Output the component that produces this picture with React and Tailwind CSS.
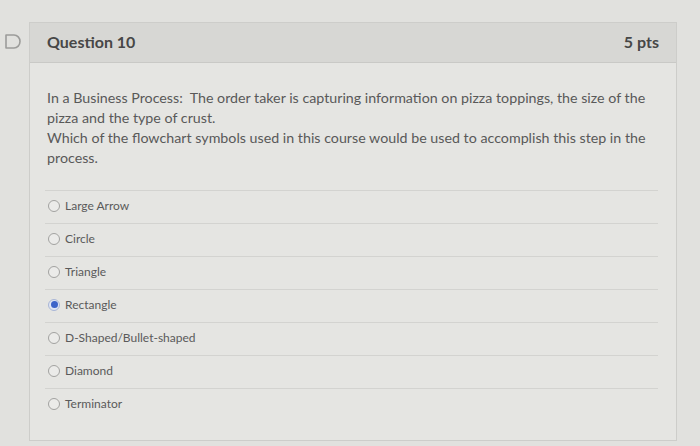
import React from "react";

const options = [
  { label: "Large Arrow" },
  { label: "Circle" },
  { label: "Triangle" },
  { label: "Rectangle", selected: true },
  { label: "D-Shaped/Bullet-shaped" },
  { label: "Diamond" },
  { label: "Terminator" },
];

function Radio({ selected }) {
  if (selected) {
    return (
      <span className="flex h-[12px] w-[12px] items-center justify-center rounded-full border border-[#a9b6d6] bg-[#dfe5f3]">
        <span className="h-[7px] w-[7px] rounded-full bg-[#3c63c9]" />
      </span>
    );
  }
  return <span className="h-[12px] w-[12px] rounded-full border-[1.5px] border-[#a2a2a0] bg-[#ebebe9]" />;
}

export default function App() {
  return (
    <div
      className="flex h-[446px] w-[700px] overflow-hidden bg-[#e1e1de] pt-[22px]"
      style={{ fontFamily: "Lato, 'Open Sans', sans-serif" }}
    >
      <div className="w-[29px] shrink-0">
        <svg className="ml-[5px] mt-[12px]" width="16" height="15" viewBox="0 0 16 15">
          <path
            d="M1 1 H9 A6 6.5 0 0 1 9 14 H1 Z"
            fill="none"
            stroke="#9c9c9a"
            strokeWidth="1.6"
            strokeLinejoin="round"
          />
        </svg>
      </div>
      <div className="flex h-[419px] w-[648px] flex-col border border-[#cdcdca] bg-[#e5e5e2]">
        <div className="flex h-[40px] shrink-0 items-center justify-between border-b border-[#c9c9c6] bg-[#d7d7d4] px-[17px]">
          <span className="pb-[1px] text-[16px] font-bold text-[#474747]">Question 10</span>
          <span className="pb-[1px] text-[16px] font-bold text-[#474747]">5 pts</span>
        </div>
        <div className="px-[17px] pt-[25px]">
          <div className="text-[14.25px] leading-[20px] text-[#595959] whitespace-nowrap">
            <span className="block">
              In a Business Process:&nbsp; The order taker is capturing information on pizza toppings, the size of the
            </span>
            <span className="block">pizza and the type of crust.</span>
            <span className="block">
              Which of the flowchart symbols used in this course would be used to accomplish this step in the
            </span>
            <span className="block">process.</span>
          </div>
          <div className="mt-[22px] mr-[1px] ml-[-2px]">
            {options.map((o) => (
              <div
                key={o.label}
                className="flex h-[33px] items-center gap-[5px] border-t border-[#d3d3d0] pb-[3px] pl-[3px]"
              >
                <Radio selected={o.selected} />
                <span className="text-[12px] text-[#5a5a5a]">{o.label}</span>
              </div>
            ))}
          </div>
        </div>
      </div>
    </div>
  );
}
